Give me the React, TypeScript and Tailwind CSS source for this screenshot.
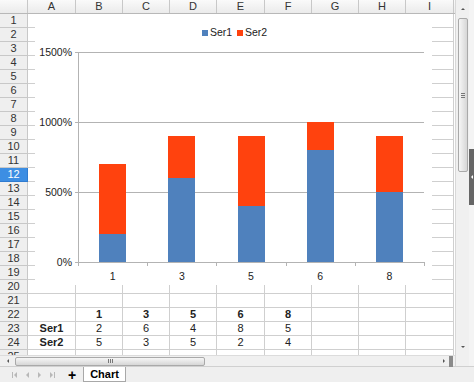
import React from "react";

const COLS = ["A", "B", "C", "D", "E", "F", "G", "H", "I"];
const WIDTHS = ["w-[48px]", "w-[47px]", "w-[47px]", "w-[47px]", "w-[48px]", "w-[47px]", "w-[47px]", "w-[47px]", "w-[48px]"];
const ROWS = Array.from({ length: 25 }, (_, i) => i + 1);

const cats = ["1", "3", "5", "6", "8"];
const ser1 = [2, 6, 4, 8, 5];
const ser2 = [5, 3, 5, 2, 4];

// cell contents for rows 22-24
const table: Record<number, { text: string; bold?: boolean }[]> = {
  22: [{ text: "" }, ...cats.map((c) => ({ text: c, bold: true }))],
  23: [{ text: "Ser1", bold: true }, ...ser1.map((v) => ({ text: String(v) }))],
  24: [{ text: "Ser2", bold: true }, ...ser2.map((v) => ({ text: String(v) }))],
};

function Tri({ dir, size = 4, color = "#555" }: { dir: "l" | "r" | "u" | "d"; size?: number; color?: string }) {
  const s = size;
  const pts = {
    l: `${s},0 ${s},${s * 2} 0,${s}`,
    r: `0,0 0,${s * 2} ${s},${s}`,
    u: `0,${s} ${s * 2},${s} ${s},0`,
    d: `0,0 ${s * 2},0 ${s},${s}`,
  }[dir];
  const w = dir === "l" || dir === "r" ? s : s * 2;
  const h = dir === "l" || dir === "r" ? s * 2 : s;
  return (
    <svg width={w} height={h} className="block">
      <polygon points={pts} fill={color} />
    </svg>
  );
}

function Chart() {
  const x0 = 43;
  const x1 = 389;
  const yBase = 248;
  const step = (x1 - x0) / 5;
  const px = 14; // px per 100%
  return (
    <div className="absolute left-[35px] top-[14px] w-[397px] h-[271px] bg-white">
      <svg width={397} height={271} style={{ fontFamily: '"Liberation Sans", Arial, sans-serif' }}>
        {/* legend */}
        <rect x={167} y={16} width={6} height={6} fill="#4f81bd" />
        <text x={175} y={22} fontSize={10.5} fill="#222">Ser1</text>
        <rect x={202} y={16} width={6} height={6} fill="#ff420e" />
        <text x={210} y={22} fontSize={10.5} fill="#222">Ser2</text>

        {/* grid */}
        {[0, 1, 2, 3].map((i) => {
          const y = yBase - i * 70;
          return (
            <g key={i}>
              <line x1={40} x2={x1} y1={y + 0.5} y2={y + 0.5} stroke="#b3b3b3" />
              <text x={37} y={y + 4} fontSize={10.5} textAnchor="end" fill="#222">
                {i * 500}%
              </text>
            </g>
          );
        })}
        <line x1={x0 + 0.5} x2={x0 + 0.5} y1={38} y2={yBase + 4} stroke="#b3b3b3" />
        {[0, 1, 2, 3, 4, 5].map((i) => {
          const x = Math.round(x0 + i * step) + 0.5;
          return <line key={i} x1={x} x2={x} y1={yBase} y2={yBase + 4} stroke="#b3b3b3" />;
        })}

        {/* bars */}
        {cats.map((c, i) => {
          const cx = x0 + step * i + step / 2;
          const bx = Math.round(cx - 13.5);
          const h1 = ser1[i] * px;
          const h2 = ser2[i] * px;
          return (
            <g key={c}>
              <rect x={bx} y={yBase - h1} width={27} height={h1} fill="#4f81bd" />
              <rect x={bx} y={yBase - h1 - h2} width={27} height={h2} fill="#ff420e" />
              <text x={cx} y={266} fontSize={10.5} textAnchor="middle" fill="#222">
                {c}
              </text>
            </g>
          );
        })}
      </svg>
    </div>
  );
}

function Sheet() {
  return (
    <div className="relative h-[355px] overflow-hidden bg-white">
      <div className="flex h-[14px] bg-gradient-to-b from-[#fafafa] to-[#ebebeb] border-b border-[#b8b8b8]">
        <div className="w-[28px] shrink-0 border-r border-[#c8c8c8]" />
        {COLS.map((c, i) => (
          <div
            key={c}
            className={`${WIDTHS[i]} shrink-0 border-r border-[#c8c8c8] flex items-center justify-center text-[11px] leading-none text-[#333]`}
          >
            {c}
          </div>
        ))}
      </div>
      {ROWS.map((r) => (
        <div key={r} className="flex h-[14px]">
          <div
            className={`w-[28px] shrink-0 border-r border-b flex items-center justify-center text-[11px] leading-none ${
              r === 12
                ? "bg-[#3d8ee3] border-[#2f7bd0] text-white"
                : "bg-[#efefef] border-[#c8c8c8] text-[#333]"
            }`}
          >
            {r}
          </div>
          {COLS.map((c, i) => {
            const cell = table[r]?.[i];
            return (
              <div
                key={c}
                className={`${WIDTHS[i]} shrink-0 border-r border-b border-[#cfcfcf] flex items-center justify-center text-[11px] leading-none text-[#222] ${
                  cell?.bold ? "font-bold" : ""
                }`}
              >
                {cell?.text}
              </div>
            );
          })}
        </div>
      ))}
      <Chart />
    </div>
  );
}

function HScroll() {
  return (
    <div className="flex items-center h-[11px] bg-[#f0f0f0] border-t border-[#dcdcdc]">
      <div className="w-[15px] flex justify-center">
        <Tri dir="l" size={2} />
      </div>
      <div className="w-[190px] h-[9px] rounded-[2px] border border-[#a9a9a9] bg-gradient-to-b from-[#f6f6f6] to-[#d6d6d6] flex items-center justify-center gap-[1px]">
        <div className="w-px h-[4px] bg-[#777]" />
        <div className="w-px h-[4px] bg-[#777]" />
        <div className="w-px h-[4px] bg-[#777]" />
      </div>
      <div className="flex-1" />
      <div className="w-[10px] flex justify-center">
        <Tri dir="r" size={2} />
      </div>
      <div className="w-[4px] h-[11px] bg-[#8a8a8a] mr-[2px]" />
    </div>
  );
}

function VScroll() {
  return (
    <div className="w-[14px] h-[366px] bg-[#f0f0f0] border-l border-[#d8d8d8] flex flex-col items-center">
      <div className="h-[18px] flex items-center">
        <Tri dir="u" size={2} />
      </div>
      <div className="w-[10px] h-[154px] rounded-[2px] border border-[#a9a9a9] bg-gradient-to-r from-[#f6f6f6] to-[#d6d6d6] flex flex-col items-center justify-center gap-[1px]">
        <div className="w-[4px] h-px bg-[#777]" />
        <div className="w-[4px] h-px bg-[#777]" />
        <div className="w-[4px] h-px bg-[#777]" />
      </div>
      <div className="flex-1" />
      <div className="h-[20px] flex items-start">
        <Tri dir="d" size={2} />
      </div>
    </div>
  );
}

function SideStrip() {
  return (
    <div className="w-[5px] h-[366px] bg-[#f4f4f4] flex flex-col">
      <div className="h-[149px]" />
      <div className="h-[56px] bg-[#666] flex items-center justify-center">
        <Tri dir="l" size={2} color="#fff" />
      </div>
    </div>
  );
}

function TabBar() {
  const c = "#b8b8b8";
  return (
    <div className="flex items-stretch h-[16px] bg-[#efefef] border-t border-[#d0d0d0]">
      <div className="flex items-center pl-[12px] gap-[9px]">
        <div className="flex items-center gap-[1px]">
          <div className="w-px h-[6px] bg-[#b8b8b8]" />
          <Tri dir="l" size={3} color={c} />
        </div>
        <Tri dir="l" size={3} color={c} />
        <Tri dir="r" size={3} color={c} />
        <div className="flex items-center gap-[1px]">
          <Tri dir="r" size={3} color={c} />
          <div className="w-px h-[6px] bg-[#b8b8b8]" />
        </div>
      </div>
      <div className="w-[26px] flex items-center justify-center text-[14px] font-bold leading-none text-black pl-[8px]">
        +
      </div>
      <div className="w-[43px] ml-[2px] bg-white border-x border-b border-[#a8a8a8] flex items-center justify-center text-[11px] font-bold text-black">
        Chart
      </div>
    </div>
  );
}

export default function App() {
  return (
    <div
      className="w-[474px] h-[382px] overflow-hidden bg-white"
      style={{ fontFamily: '"Liberation Sans", Arial, sans-serif' }}
    >
      <div className="flex h-[366px]">
        <div className="w-[455px] flex flex-col">
          <Sheet />
          <HScroll />
        </div>
        <VScroll />
        <SideStrip />
      </div>
      <TabBar />
    </div>
  );
}
